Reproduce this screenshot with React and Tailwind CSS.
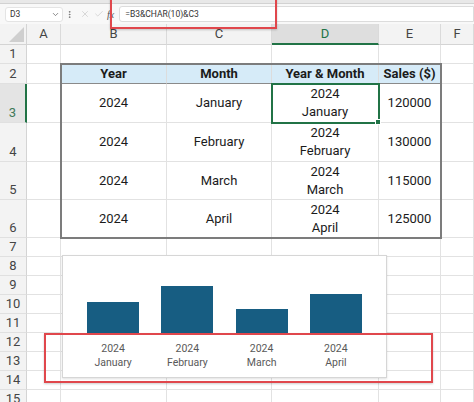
import { X, Check, EllipsisVertical, ChevronDown } from "lucide-react";

const font = { fontFamily: "Roboto, 'Liberation Sans', sans-serif" };

const colLetters = ["A", "B", "C", "D", "E", "F"];
const rowHeights = [19, 20, 39, 39, 38, 38, 19, 19, 19, 19, 19, 19, 19, 19, 19];

const data = [
  { year: 2024, month: "January", sales: 120000 },
  { year: 2024, month: "February", sales: 130000 },
  { year: 2024, month: "March", sales: 115000 },
  { year: 2024, month: "April", sales: 125000 },
];

function inTable(r, c) {
  // rows 2-6, columns B-E
  return r >= 2 && r <= 6 && c >= 1 && c <= 4;
}

function SalesTable() {
  return (
    <div className="col-start-3 col-span-4 row-start-3 row-span-5 grid grid-cols-[106px_105px_107px_62px] grid-rows-[20px_39px_39px_38px_38px] bg-white outline-2 outline-[#7c7c7c] -outline-offset-1 z-[5] text-[13px] text-[#1b1b1b]">
      {["Year", "Month", "Year & Month", "Sales ($)"].map((h) => (
        <div
          key={h}
          className="bg-[#d6ebf8] font-bold flex items-center justify-center border-r border-b border-r-[#dcdcdc] border-b-[#8a8a8a]"
        >
          {h}
        </div>
      ))}
      {data.map((d, i) => (
        <>
          <div key={"y" + i} className="flex items-center justify-center border-r border-b border-[#e2e2e2]">
            {d.year}
          </div>
          <div key={"m" + i} className="flex items-center justify-center border-r border-b border-[#e2e2e2]">
            {d.month}
          </div>
          <div
            key={"ym" + i}
            className={
              "flex flex-col items-center justify-center leading-[18px] border-r border-b border-[#e2e2e2] " +
              (i === 0 ? "relative z-10 outline-2 outline-[#217346] -outline-offset-1" : "")
            }
          >
            <span>{d.year}</span>
            <span>{d.month}</span>
            {i === 0 && (
              <span className="absolute -right-[3px] -bottom-[3px] w-[6px] h-[6px] bg-[#217346] border border-white" />
            )}
          </div>
          <div key={"s" + i} className="flex items-center justify-center border-r border-b border-[#e2e2e2]">
            {d.sales}
          </div>
        </>
      ))}
    </div>
  );
}

function Chart() {
  return (
    <div className="absolute left-[62px] top-[255px] w-[325px] h-[123px] bg-white border border-[#d6d6d6] shadow-[0_1px_2px_rgba(0,0,0,0.12)] z-20">
      <div className="flex px-[13px]">
        {data.map((d) => (
          <div key={d.month} className="flex-1 flex flex-col items-center">
            <div className="h-[77px] w-full flex items-end justify-center">
              <div
                className="w-[52px] bg-[#175d82]"
                style={{ height: Math.round((d.sales - 100000) * 0.00157) }}
              />
            </div>
            <div className="mt-[9px] flex flex-col items-center text-[10.5px] leading-[14px] text-[#595959]">
              <span>{d.year}</span>
              <span>{d.month}</span>
            </div>
          </div>
        ))}
      </div>
    </div>
  );
}

export default function App() {
  const cells = [];

  // header row
  cells.push(
    <div key="corner" className="bg-[#f3f3f3] border-r border-b border-[#d4d4d4] relative">
      <svg className="absolute right-[2px] bottom-[2px]" width="15" height="15" viewBox="0 0 15 15">
        <polygon points="15,0 15,15 0,15" fill="#cfcfcf" />
      </svg>
    </div>
  );
  colLetters.forEach((l) => {
    const sel = l === "D";
    cells.push(
      <div
        key={"h" + l}
        className={
          "flex items-center justify-center text-[13px] border-r border-[#dadada] " +
          (sel
            ? "bg-[#dedede] text-[#217346] border-b-2 border-b-[#217346]"
            : "bg-[#f3f3f3] text-[#454545] border-b border-b-[#d4d4d4]")
        }
      >
        {l}
      </div>
    );
  });

  rowHeights.forEach((h, i) => {
    const r = i + 1;
    const sel = r === 3;
    cells.push(
      <div
        key={"r" + r}
        className={
          "flex items-end justify-center pb-[1px] text-[13px] leading-[16px] border-b border-[#e0e0e0] " +
          (sel
            ? "bg-[#e4e4e4] text-[#3f7a59] border-r-2 border-r-[#217346]"
            : "bg-[#f3f3f3] text-[#454545] border-r border-r-[#d4d4d4]")
        }
      >
        {r}
      </div>
    );
    colLetters.forEach((l, c) => {
      if (inTable(r, c)) return;
      cells.push(<div key={l + r} className="border-r border-b border-[#e2e2e2] bg-white" />);
    });
  });

  return (
    <div className="relative w-[474px] h-[402px] overflow-hidden bg-white" style={font}>
      {/* formula bar */}
      <div className="h-[4px] bg-[#e8e8e8] border-b border-[#d2d2d2]" />
      <div className="h-[20px] flex items-center bg-[#f8f8f8] text-[#333]">
        <div className="ml-[5px] w-[58px] h-[15px] bg-white border border-[#e4e4e4] rounded-[3px] flex items-center pl-[4px] pr-[2px] text-[8.5px]">
          <span>D3</span>
          <ChevronDown className="ml-auto text-[#666]" size={9} strokeWidth={2} />
        </div>
        <EllipsisVertical className="ml-[2px] text-[#777]" size={9} strokeWidth={2.5} />
        <X className="ml-[6px] text-[#c4c4c4]" size={10} strokeWidth={1.5} />
        <Check className="ml-[4px] text-[#c4c4c4]" size={10} strokeWidth={1.5} />
        <span className="ml-[3px] italic text-[10px] text-[#555]" style={{ fontFamily: "'Liberation Serif', serif" }}>
          fx
        </span>
        <div className="ml-[5px] flex-1 h-[16px] bg-white border border-[#dcdcdc] rounded-l-[3px] flex items-center pl-[5px] text-[8.5px]">
          =B3&amp;CHAR(10)&amp;C3
        </div>
      </div>

      {/* sheet grid */}
      <div className="grid grid-cols-[27px_34px_106px_105px_107px_62px_1fr] grid-rows-[21px_19px_20px_39px_39px_38px_38px_repeat(9,19px)]">
        <SalesTable />
        {cells}
      </div>

      <Chart />

      {/* highlight boxes */}
      <div className="absolute left-[110px] -top-[4px] w-[167px] h-[33px] border-2 border-[#e0474c] shadow-[0_1px_2px_rgba(0,0,0,0.2)] z-30" />
      <div className="absolute left-[44px] top-[333px] w-[389px] h-[50px] border-2 border-[#e0474c] shadow-[0_1px_2px_rgba(0,0,0,0.2)] z-30" />
    </div>
  );
}
